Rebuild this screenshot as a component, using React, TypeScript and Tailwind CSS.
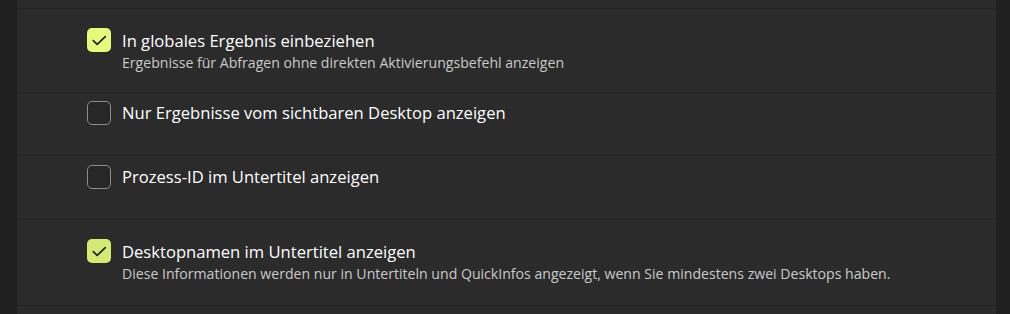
import type { ReactNode } from "react";

interface Option {
  title: string;
  description?: string;
  checked: boolean;
  highlight?: boolean;
}

const options: Option[] = [
  {
    title: "In globales Ergebnis einbeziehen",
    description: "Ergebnisse für Abfragen ohne direkten Aktivierungsbefehl anzeigen",
    checked: true,
    highlight: true,
  },
  { title: "Nur Ergebnisse vom sichtbaren Desktop anzeigen", checked: false },
  { title: "Prozess-ID im Untertitel anzeigen", checked: false },
  {
    title: "Desktopnamen im Untertitel anzeigen",
    description:
      "Diese Informationen werden nur in Untertiteln und QuickInfos angezeigt, wenn Sie mindestens zwei Desktops haben.",
    checked: true,
  },
];

function CheckBox({ checked, highlight }: { checked: boolean; highlight?: boolean }) {
  if (!checked) {
    return (
      <span className="w-6 h-6 shrink-0 rounded-[5px] border border-[#8b8b8b] bg-[#272727]" />
    );
  }
  return (
    <span
      className={
        highlight
          ? "w-6 h-6 shrink-0 rounded-[5px] bg-[#e4fb7c]"
          : "w-6 h-6 shrink-0 rounded-[5px] bg-[#d5ea72]"
      }
    >
      <svg width="24" height="24" viewBox="0 0 24 24" fill="none">
        <path
          d="M6.3 12.6 L10.2 16.4 L18.3 8.6"
          stroke="#1a1a1a"
          strokeWidth="1.6"
          strokeLinecap="round"
          strokeLinejoin="round"
        />
      </svg>
    </span>
  );
}

function Row({ children, className }: { children: ReactNode; className: string }) {
  return <div className={`bg-[#2b2b2b] pl-[70px] flex items-start gap-[11px] ${className}`}>{children}</div>;
}

export default function App() {
  const rowStyles = [
    "h-[83px] pt-[19px]",
    "h-[62px] pt-[8px]",
    "h-[63px] pt-[9px]",
    "h-[85px] pt-[19px]",
  ];

  return (
    <div
      className="w-[1010px] h-[314px] overflow-hidden bg-[#202020] pl-[17px] pr-[14px]"
      style={{ fontFamily: '"Open Sans", "Noto Sans", sans-serif' }}
    >
      <div className="flex flex-col gap-px bg-[#232323] h-full">
        <div className="h-[8px] bg-[#2b2b2b]" />
        {options.map((o, i) => (
          <Row key={o.title} className={rowStyles[i]}>
            <CheckBox checked={o.checked} highlight={o.highlight} />
            <div className={o.description ? "pt-[2px]" : "pt-[1px]"}>
              <div className="text-[16.6px] leading-[22px] text-white">{o.title}</div>
              {o.description && (
                <div className="mt-[2px] text-[14.1px] leading-[18px] text-[#c9c9c9]">{o.description}</div>
              )}
            </div>
          </Row>
        ))}
        <div className="flex-1 bg-[#2b2b2b]" />
      </div>
    </div>
  );
}
